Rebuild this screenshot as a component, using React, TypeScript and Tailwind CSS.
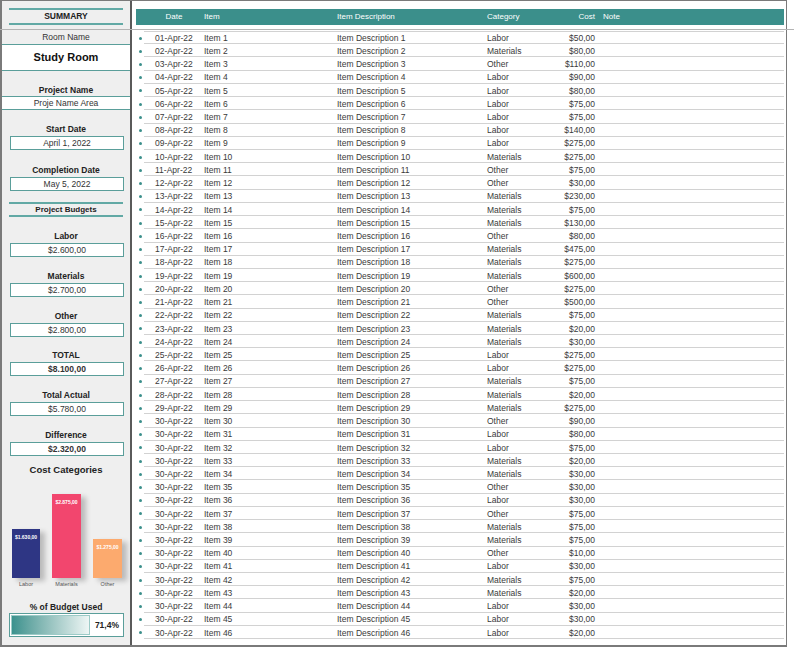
import React from "react";

const cats = [
  "Labor","Materials","Other","Labor","Labor","Labor","Labor","Labor","Labor","Materials",
  "Other","Other","Materials","Materials","Materials","Other","Materials","Materials","Materials","Other",
  "Other","Materials","Materials","Materials","Labor","Labor","Materials","Materials","Materials","Other",
  "Labor","Labor","Materials","Materials","Other","Labor","Other","Materials","Materials","Other",
  "Labor","Materials","Materials","Labor","Labor","Labor",
];
const costs = [
  50,80,110,90,80,75,75,140,275,275,
  75,30,230,75,130,80,475,275,600,275,
  500,75,20,30,275,275,75,20,275,90,
  80,75,20,30,30,30,75,75,75,10,
  30,75,20,30,30,20,
];

const rows = cats.map((c, i) => {
  const d = Math.min(i + 1, 30);
  return {
    date: `${d < 10 ? "0" + d : d}-Apr-22`,
    item: `Item ${i + 1}`,
    desc: `Item Description ${i + 1}`,
    cat: c,
    cost: `$${costs[i]},00`,
  };
});

function Label({ children, bold = true }: { children: React.ReactNode; bold?: boolean }) {
  return (
    <div className={`h-[13px] leading-[13px] text-center text-[8.5px] text-[#222] ${bold ? "font-bold" : ""}`}>
      {children}
    </div>
  );
}

function Box({ children, bold = false }: { children: React.ReactNode; bold?: boolean }) {
  return (
    <div
      className={`ml-[8px] mr-[6px] h-[14px] bg-white border-[1.5px] border-[#5a9e9a] flex items-center justify-center text-[8.5px] text-[#333] ${bold ? "font-bold text-[#222]" : ""}`}
    >
      {children}
    </div>
  );
}

function TealLine() {
  return <div className="mx-[7px] h-[2px] bg-[#62a9a5]" />;
}

function Bar({ h, w, color, value, label }: { h: string; w: string; color: string; value: string; label: string }) {
  return (
    <div className={`flex flex-col items-center ${w}`}>
      <div className={`${h} w-full ${color} shadow-[5px_3px_5px_rgba(0,0,0,0.22)] flex justify-center pt-[6px]`}>
        <span className="text-[5px] font-bold text-white leading-none">{value}</span>
      </div>
      <div className="h-[12px] leading-[12px] text-[5.5px] text-[#555]">{label}</div>
    </div>
  );
}

export default function App() {
  return (
    <div className="relative w-[794px] h-[648px] bg-white font-['Liberation_Sans',Arial,sans-serif] overflow-hidden">
      <div className="w-[787px] h-[647px] border-l-2 border-t border-r border-b-2 border-[#7a7a7a] flex">
        {/* Sidebar */}
        <div className="w-[130px] shrink-0 bg-[#efefef] border-r-2 border-[#5a5a5a] flex flex-col">
          <div className="h-[29px] pt-[7px]">
            <TealLine />
            <div className="h-[13px] leading-[13px] text-center text-[8.5px] font-bold text-[#222]">SUMMARY</div>
            <TealLine />
          </div>
          <div className="h-[14px] leading-[14px] text-center text-[8.5px] text-[#333]">Room Name</div>
          <div className="h-[27px] bg-white border-y border-[#5a9e9a] flex items-center justify-center text-[11px] font-bold text-[#111]">
            Study Room
          </div>
          <div className="h-[13px]" />
          <div className="h-[12px] leading-[12px] text-center text-[8.5px] font-bold text-[#222]">Project Name</div>
          <div className="h-[14px] bg-white border-y border-[#5a9e9a] flex items-center justify-center text-[8.5px] text-[#333]">
            Proje Name Area
          </div>
          <div className="h-[13px]" />
          <Label>Start Date</Label>
          <Box>April 1, 2022</Box>
          <div className="h-[14px]" />
          <Label>Completion Date</Label>
          <Box>May 5, 2022</Box>
          <div className="h-[11px]" />
          <TealLine />
          <div className="h-[11px] leading-[11px] text-center text-[8px] font-bold text-[#222]">Project Budgets</div>
          <TealLine />
          <div className="h-[13px]" />
          <Label>Labor</Label>
          <Box>$2.600,00</Box>
          <div className="h-[13px]" />
          <Label>Materials</Label>
          <Box>$2.700,00</Box>
          <div className="h-[13px]" />
          <Label>Other</Label>
          <Box>$2.800,00</Box>
          <div className="h-[12px]" />
          <Label>TOTAL</Label>
          <Box bold>$8.100,00</Box>
          <div className="h-[13px]" />
          <Label>Total Actual</Label>
          <Box>$5.780,00</Box>
          <div className="h-[13px]" />
          <Label>Difference</Label>
          <Box bold>$2.320,00</Box>
          <div className="h-[7px]" />
          <div className="h-[14px] leading-[14px] text-center text-[9.5px] font-bold text-[#222]">Cost Categories</div>
          <div className="h-[113px] flex items-end pl-[10px] gap-[12px]">
            <Bar h="h-[49px]" w="w-[28px]" color="bg-[#2e3684]" value="$1.630,00" label="Labor" />
            <Bar h="h-[84px]" w="w-[29px]" color="bg-[#f2466e]" value="$2.875,00" label="Materials" />
            <Bar h="h-[39px]" w="w-[29px]" color="bg-[#fcaa6e]" value="$1.275,00" label="Other" />
          </div>
          <div className="h-[11px]" />
          <div className="h-[12px] leading-[12px] text-center text-[8.5px] font-bold text-[#222]">% of Budget Used</div>
          <div className="ml-[7px] w-[115px] h-[24px] border-[1.5px] border-[#5a9e9a] bg-white flex items-center p-[1px]">
            <div className="w-[79px] h-full bg-gradient-to-r from-[#3a928e] to-[#eef6f5] border border-[#9ccbc7]" />
            <div className="flex-1 text-right pr-[3px] text-[8.5px] font-bold text-[#222]">71,4%</div>
          </div>
        </div>

        {/* Table */}
        <div className="flex-1 pt-[8px] pl-[4px] pr-[2px] flex flex-col">
          <div className="h-[16px] bg-[#3b8f8b] flex items-center text-[8px] text-white">
            <div className="w-[8px]" />
            <div className="w-[60px] text-center">Date</div>
            <div className="w-[133px]">Item</div>
            <div className="w-[150px]">Item Description</div>
            <div className="w-[68px]">Category</div>
            <div className="w-[40px] text-right">Cost</div>
            <div className="pl-[8px]">Note</div>
          </div>
          <div className="mt-[6px] flex flex-col">
            {rows.map((r, i) => (
              <div key={i} className="h-[13.22px] flex items-stretch">
                <div className="w-[8px] flex items-center justify-center pt-[1px]">
                  <div className="w-[3px] h-[3px] rounded-full bg-[#3b8f8b]" />
                </div>
                <div
                  className={`flex-1 flex items-center pt-[2px] border-b border-[#d2d2d2] text-[8.5px] text-[#3a3a3a] ${i === 0 ? "border-t" : ""}`}
                >
                  <div className="w-[60px] pl-[11px]">{r.date}</div>
                  <div className="w-[133px]">{r.item}</div>
                  <div className="w-[150px]">{r.desc}</div>
                  <div className="w-[68px]">{r.cat}</div>
                  <div className="w-[40px] text-right">{r.cost}</div>
                </div>
              </div>
            ))}
          </div>
        </div>
      </div>
      <div className="absolute left-0 top-[29px] w-full h-px bg-[#b4b4b4]" />
    </div>
  );
}
